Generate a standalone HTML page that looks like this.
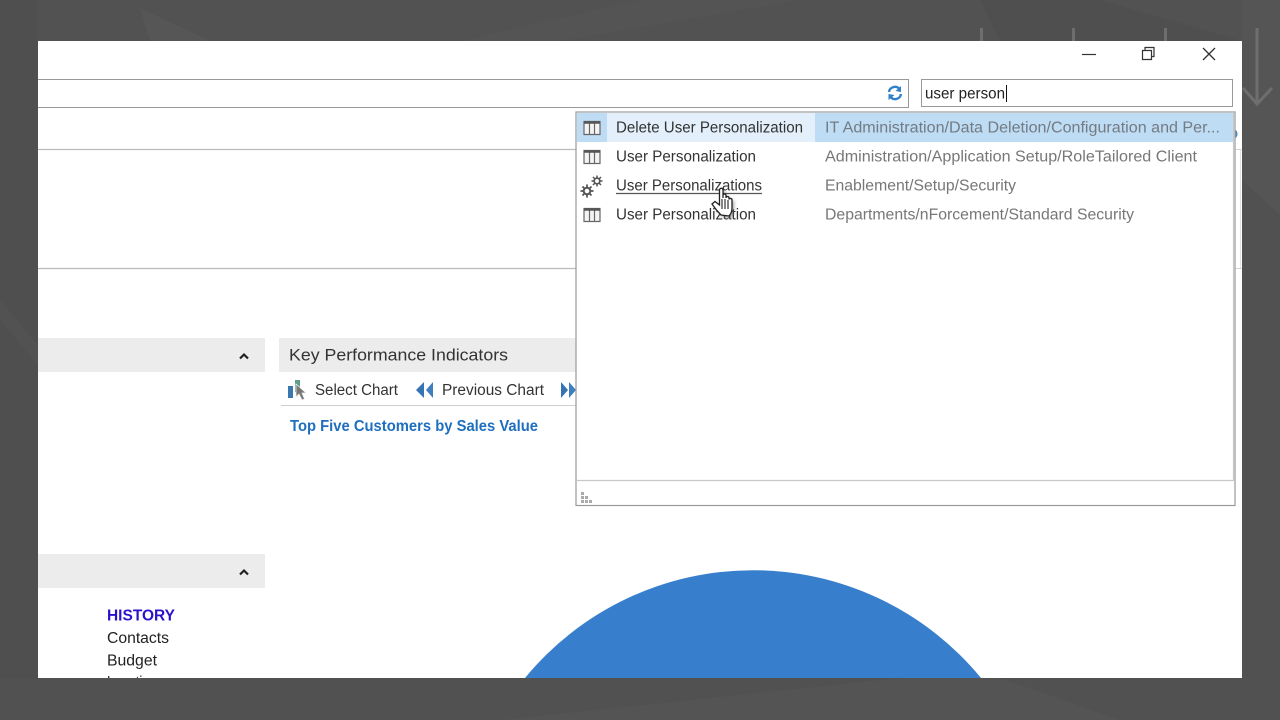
<!DOCTYPE html>
<html><head><meta charset="utf-8"><title>Search</title>
<style>
html,body{margin:0;padding:0;width:1280px;height:720px;overflow:hidden;background:#525252}
svg{display:block;filter:blur(.35px)}
text{font-family:"Liberation Sans",sans-serif;font-size:15.5px}
</style></head><body>
<svg width="1280" height="720" viewBox="0 0 1280 720" xmlns="http://www.w3.org/2000/svg">
<defs><filter id="s" x="-50%" y="-50%" width="200%" height="200%"><feGaussianBlur stdDeviation="1.500"/></filter>
<clipPath id="c"><rect x="38" y="41" width="1204" height="637"/></clipPath></defs>
<rect width="1280" height="720" fill="#525252"/>
<polygon points="140,8 210,41 150,41" fill="#565656"/>
<polygon points="0,0 38,0 38,720 0,720" fill="#4f4f4f"/>
<polygon points="0,300 38,345 38,365 0,320" fill="#525252"/>
<polygon points="1242,0 1280,0 1280,720 1242,720" fill="#555"/>
<polygon points="1242,180 1280,215 1280,720 1242,720" fill="#515151"/>
<polygon points="460,41 640,0 800,0 560,41" fill="#545454"/>
<polygon points="980,0 1100,0 1242,41 1000,41" fill="#4f4f4f"/>
<rect y="678" width="1280" height="42" fill="#515151"/>
<polygon points="500,720 900,678 1000,678 1120,720" fill="#545454"/>
<g fill="#6e6e6e"><rect x="980" y="28" width="3" height="13"/><rect x="1072" y="28" width="3" height="13"/><rect x="1164" y="28" width="3" height="13"/></g>
<path d="M1257 28V104M1243 88L1257 104L1272 88" fill="none" stroke="#6e6e6e" stroke-width="3"/>

<rect x="38" y="41" width="1204" height="637" fill="#fff"/>
<path d="M1082 54.500H1096" stroke="#333" stroke-width="1.200"/>
<path d="M1142.500 50.500H1151.500V59.500H1142.500ZM1145 50V47.500H1154V56.500H1151.500" fill="none" stroke="#333" stroke-width="1.200"/>
<path d="M1203 48L1215 60M1215 48L1203 60" stroke="#333" stroke-width="1.300"/>

<path d="M38 79.500H908.500V107.500H38" fill="#fff" stroke="#999"/>
<path d="M38 107.500H576" stroke="#999"/>
<path d="M889 92A6 6 0 0 1 899.500 89M901 94A6 6 0 0 1 890.500 97" fill="none" stroke="#2f7fc9" stroke-width="2.400"/>
<polygon points="901,86 901,92 895.500,91" fill="#2f7fc9"/><polygon points="888.500,100 888.500,94 894.500,95" fill="#2f7fc9"/>
<rect x="921.500" y="79.500" width="311" height="27" fill="#fff" stroke="#999"/>
<text x="925" y="98.500" textLength="80" lengthAdjust="spacingAndGlyphs" fill="#222">user person</text>
<path d="M1006.500 85V102" stroke="#111"/>

<path d="M38 149.500H576M38 268.500H576" stroke="#bbb" stroke-width="1.200"/>
<path d="M1235 149.500H1242M1235 268.500H1242" stroke="#d5d5d5"/>
<path d="M1240.500 149V268" stroke="#e2e2e2"/>
<circle cx="1232" cy="134" r="5.500" fill="#4b86c0"/>

<rect x="38" y="338" width="227" height="34" fill="#ececec"/>
<path d="M240 358.500L244 354.500L248 358.500" fill="none" stroke="#222" stroke-width="2.200"/>
<rect x="279" y="338" width="297" height="34" fill="#ececec"/>
<text x="289" y="360.500" style="font-size:17px" textLength="219" lengthAdjust="spacingAndGlyphs" fill="#333">Key Performance Indicators</text>
<rect x="288" y="386" width="5" height="12" fill="#3a78b0"/>
<rect x="295" y="380" width="5" height="12" fill="#5f9d8b"/>
<path d="M296 384L296 397L299 394L302 400L304.500 399L302 393L306 393Z" fill="#777" stroke="#eee" stroke-width=".8"/>
<text x="315" y="395" textLength="83" lengthAdjust="spacingAndGlyphs" fill="#333">Select Chart</text>
<polygon points="424,382 416,390 424,398" fill="#3673b5"/><polygon points="433,382 426,390 433,398" fill="#3f7fc0"/>
<text x="442" y="395" textLength="102" lengthAdjust="spacingAndGlyphs" fill="#333">Previous Chart</text>
<polygon points="561,382 568,390 561,398" fill="#3673b5"/><polygon points="569,382 576,390 569,398" fill="#3f7fc0"/>
<path d="M281 405.500H576" stroke="#cfcfcf"/>
<text x="290" y="431" font-weight="bold" textLength="248" lengthAdjust="spacingAndGlyphs" fill="#1f6fbf">Top Five Customers by Sales Value</text>

<rect x="38" y="554" width="227" height="34" fill="#ececec"/>
<path d="M240 574.500L244 570.500L248 574.500" fill="none" stroke="#222" stroke-width="2.200"/>
<text x="107" y="620.500" font-weight="bold" textLength="68" lengthAdjust="spacingAndGlyphs" fill="#2a12cc">HISTORY</text>
<text x="107" y="643" textLength="62" lengthAdjust="spacingAndGlyphs" fill="#222">Contacts</text>
<text x="107" y="665.500" textLength="50" lengthAdjust="spacingAndGlyphs" fill="#222">Budget</text>
<g clip-path="url(#c)"><text x="107" y="687" textLength="50" lengthAdjust="spacingAndGlyphs" fill="#222">Location</text></g>

<path d="M525 678A295 295 0 0 1 981 678Z" fill="#377fcd"/>

<rect x="576" y="112" width="659" height="393.500" fill="#fff" stroke="#999" stroke-width="1.200"/>
<path d="M577 480.500H1233.500M1233.500 112V481" stroke="#c8c8c8" fill="none" stroke-width="1.200"/>
<rect x="577" y="113" width="656" height="29" fill="#e3effa"/>
<rect x="577" y="113" width="30" height="29" fill="#bedcf3"/>
<rect x="815" y="113" width="418" height="29" fill="#bedcf3"/>

<g fill="#f4f4f4" stroke="#666" stroke-width="1.200">
<path d="M584 121.500H600V134.500H584ZM589.500 122V134M594.500 122V134"/>
<path d="M584 150.500H600V163.500H584ZM589.500 151V163M594.500 151V163"/>
<path d="M584 208.500H600V221.500H584ZM589.500 209V221M594.500 209V221"/>
</g>
<path d="M584 122.500H600M584 151.500H600M584 209.500H600" stroke="#555" stroke-width="2.500"/>
<g fill="none" stroke="#555">
<path d="M587 184.500V197.500M580.500 191H593.500M582.500 186.500L591.500 195.500M591.500 186.500L582.500 195.500" stroke-width="1.800"/>
<circle cx="587" cy="191" r="3.300" fill="#fff" stroke-width="2"/>
<path d="M597 175.500V186.500M591.500 181H602.500M593 177L601 185M601 177L593 185" stroke-width="1.500"/>
<circle cx="597" cy="181" r="2.800" fill="#fff" stroke-width="1.700"/>
</g>

<text x="616" y="132.500" textLength="187" lengthAdjust="spacingAndGlyphs" fill="#333">Delete User Personalization</text>
<text x="616" y="161.500" textLength="140" lengthAdjust="spacingAndGlyphs" fill="#333">User Personalization</text>
<text x="616" y="190.500" textLength="146" lengthAdjust="spacingAndGlyphs" fill="#333">User Personalizations</text>
<path d="M616 193.500H762" stroke="#555" stroke-width="1.300"/>
<text x="616" y="219.500" textLength="140" lengthAdjust="spacingAndGlyphs" fill="#333">User Personalization</text>
<text x="825" y="132.500" textLength="395" lengthAdjust="spacingAndGlyphs" fill="#737b83">IT Administration/Data Deletion/Configuration and Per...</text>
<text x="825" y="161.500" textLength="372" lengthAdjust="spacingAndGlyphs" fill="#777">Administration/Application Setup/RoleTailored Client</text>
<text x="825" y="190.500" textLength="191" lengthAdjust="spacingAndGlyphs" fill="#777">Enablement/Setup/Security</text>
<text x="825" y="219.500" textLength="309" lengthAdjust="spacingAndGlyphs" fill="#777">Departments/nForcement/Standard Security</text>

<path d="M723 217C719 213 716 209 714 206L717 203.500L721.500 207V192.500C721.500 189.500 725 189.500 725 192.500V200V197.500C725 195.500 728 195.500 728 197.500V200C728 198 731 198 731 200V201.500C731 200 734 200 734 202V210C734 214 733 216 731 218Z" fill="#555" opacity=".55" filter="url(#s)"/>
<path d="M721 215C717 211 714 207 712 204L715 201.500L719.500 205V190.500C719.500 187.500 723 187.500 723 190.500V198V195.500C723 193.500 726 193.500 726 195.500V198C726 196 729 196 729 198V199.500C729 198 732 198 732 200V208C732 212 731 214 729 216Z" fill="#fff" stroke="#222" stroke-width="1.300"/>
<path d="M722 199V209M725 199V209M728 200V209" stroke="#333" stroke-width="1.200"/>

<g fill="#aaa"><rect x="581" y="492" width="3" height="3"/><rect x="581" y="496" width="3" height="3"/><rect x="585" y="496" width="3" height="3"/><rect x="581" y="500" width="3" height="3"/><rect x="585" y="500" width="3" height="3"/><rect x="589" y="500" width="3" height="3"/></g>
</svg>
</body></html>
